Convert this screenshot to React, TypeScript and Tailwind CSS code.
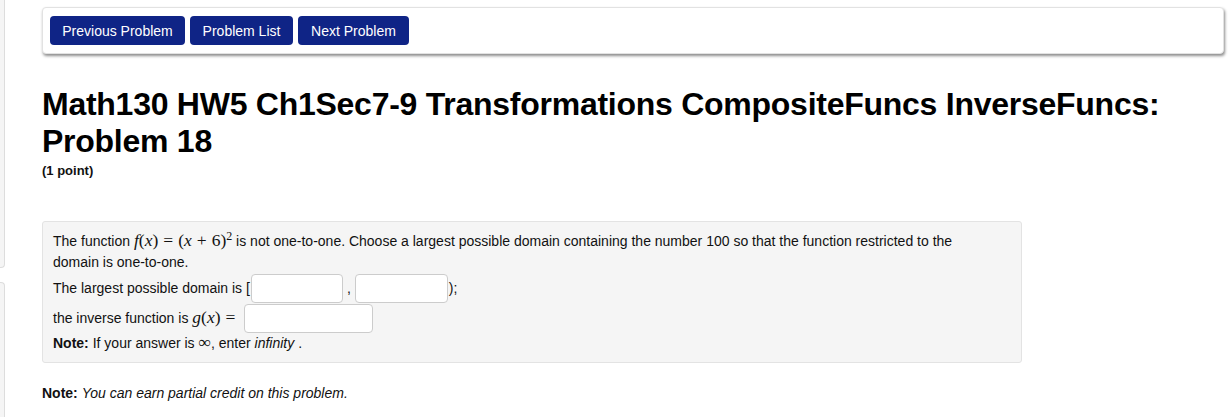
import React from "react"

const sans = { fontFamily: '"Liberation Sans", Arial, Helvetica, sans-serif' }

function M({ children }: { children: React.ReactNode }) {
  return (
    <span className="text-[17.5px] leading-none" style={{ fontFamily: '"Liberation Serif", "DejaVu Serif", serif' }}>
      {children}
    </span>
  )
}

function Op({ c }: { c: string }) {
  return <span className="mx-[5px]">{c}</span>
}

function NavButton({ label, width }: { label: string; width: string }) {
  return (
    <button className={`h-[29px] ${width} rounded-[4px] bg-[#0f2486] text-white text-[14px] leading-none`}>
      {label}
    </button>
  )
}

export default function App() {
  return (
    <div className="relative min-h-[417px] w-[1231px] bg-white text-[#111]" style={sans}>
      {/* side rails */}
      <div className="absolute left-0 top-0 h-[268px] w-[5px] bg-[#f5f5f5] border-r border-b border-[#dddddd] rounded-br-[4px]" />
      <div className="absolute left-0 top-[282px] h-[135px] w-[5px] bg-[#f5f5f5] border-r border-t border-[#dddddd] rounded-tr-[4px]" />

      <div className="pl-[42px] pr-[7px] pt-[7px]">
        <div className="flex gap-[5px] h-[47px] items-center px-[7px] border border-[#e2e2e2] rounded-[4px] bg-white shadow-[1px_2px_3px_rgba(0,0,0,0.45)]">
          <NavButton label="Previous Problem" width="w-[135px]" />
          <NavButton label="Problem List" width="w-[103px]" />
          <NavButton label="Next Problem" width="w-[111px]" />
        </div>

        <h1 className="mt-[32px] text-[32px] font-bold leading-[37px] tracking-[-0.26px] text-black">
          Math130 HW5 Ch1Sec7-9 Transformations CompositeFuncs InverseFuncs:
          <br />
          Problem 18
        </h1>
        <div className="mt-[3px] text-[13px] font-bold leading-[15px]">(1 point)</div>

        <div className="mt-[43px] w-[980px] bg-[#f5f5f5] border border-[#e3e3e3] rounded-[3px] px-[10px] pt-[9px] pb-[8px] text-[14px] leading-[21px]">
          <div>
            The function{" "}
            <M>
              <i>f</i>(<i>x</i>)<Op c="=" />(<i>x</i>
              <Op c="+" />
              6)<sup className="text-[12px] leading-none">2</sup>
            </M>{" "}
            is not one-to-one. Choose a largest possible domain containing the number 100 so that the function restricted
            to the
            <br />
            domain is one-to-one.
          </div>
          <div className="flex items-center h-[30px]">
            <span>The largest possible domain is [</span>
            <input className="ml-[1px] w-[92px] h-[29px] bg-white border border-[#cccccc] rounded-[4px]" />
            <span className="mx-[4px]">,</span>
            <input className="w-[93px] h-[29px] bg-white border border-[#cccccc] rounded-[4px]" />
            <span className="ml-[1px]">);</span>
          </div>
          <div className="flex items-center h-[30px]">
            <span>
              the inverse function is{" "}
              <M>
                <i>g</i>(<i>x</i>)<Op c="=" />
              </M>
            </span>
            <input className="ml-[4px] w-[129px] h-[29px] bg-white border border-[#cccccc] rounded-[4px]" />
          </div>
          <div>
            <b>Note:</b> If your answer is <M>∞</M>, enter <i>infinity</i> .
          </div>
        </div>

        <div className="mt-[20px] text-[14px] leading-[21px]">
          <b>Note:</b> <i>You can earn partial credit on this problem.</i>
        </div>
      </div>
    </div>
  )
}
